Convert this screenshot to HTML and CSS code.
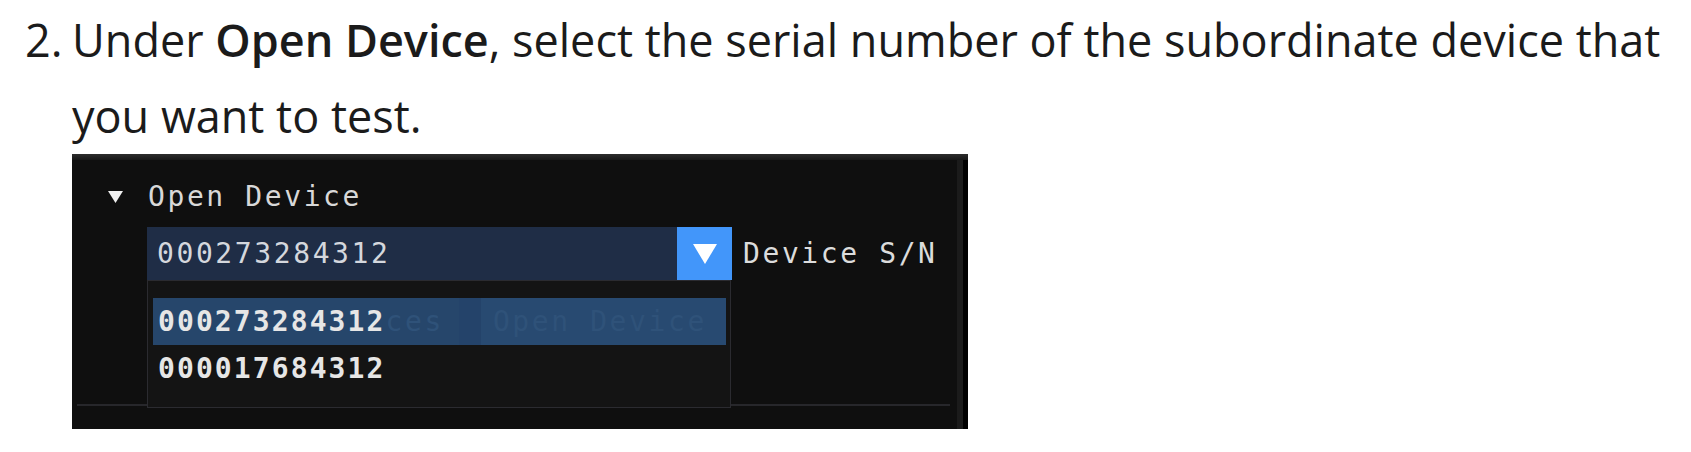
FILE: index.html
```html
<!DOCTYPE html>
<html lang="en">
<head>
<meta charset="utf-8">
<title>Open Device</title>
<link rel="stylesheet" href="styles.css">
</head>
<body>
<div class="step">
  <div class="num">2.</div>
  <div class="body">
    <p class="text">Under <b>Open Device</b>, select the serial number of the subordinate device that you want to test.</p>
    <div class="panel">
      <div class="panel-top"></div>
      <div class="panel-main">
        <div class="panel-content">
          <div class="tree-row">
            <svg class="tree-arrow" width="15" height="12" viewBox="0 0 15 12"><polygon points="0,0 15,0 7.5,12" fill="#f0f0f0"/></svg>
            <span class="mono tree-label">Open Device</span>
          </div>
          <div class="combo-row">
            <div class="combo">
              <div class="combo-value mono">000273284312</div>
              <div class="combo-btn">
                <svg width="24" height="20" viewBox="0 0 24 20"><polygon points="0,0 24,0 12,20" fill="#ffffff"/></svg>
              </div>
              <div class="popup">
                <div class="item item-active">
                  <span class="mono item-text">000273284312</span><span class="mono ghost">ces</span>
                  <span class="ghost-gap"></span>
                  <span class="ghost-btn"><span class="mono ghost">Open Device</span></span>
                </div>
                <div class="item">
                  <span class="mono item-text">000017684312</span>
                </div>
              </div>
            </div>
            <span class="mono combo-label">Device S/N</span>
          </div>
          <div class="separator"></div>
        </div>
        <div class="scroll-edge"></div>
        <div class="outer-edge"></div>
      </div>
    </div>
  </div>
</div>
</body>
</html>
```
FILE: styles.css
```css
html, body {
  margin: 0;
  padding: 0;
  background: #ffffff;
}

.step {
  display: flex;
  padding-left: 25px;
  padding-top: 2px;
  font-family: "Open Sans", "Noto Sans", sans-serif;
  font-size: 45px;
  line-height: 76px;
  color: #1b1b1b;
}

.num {
  width: 47px;
  flex: none;
}

.body {
  flex: 1;
  min-width: 0;
}

.text {
  margin: 0;
  width: 1610px;
}

.text b {
  font-weight: 600;
}

.mono {
  font-family: "DejaVu Sans Mono", "Liberation Mono", monospace;
  font-size: 28px;
  letter-spacing: 2.6px;
  line-height: 28px;
  white-space: nowrap;
}

.panel {
  width: 896px;
  height: 275px;
  background: #0f0f0f;
  display: flex;
  flex-direction: column;
}

.panel-top {
  height: 6px;
  background: linear-gradient(#2d2d2d, #171717);
  flex: none;
}

.panel-main {
  flex: 1;
  display: flex;
}

.panel-content {
  flex: 1;
  display: flex;
  flex-direction: column;
}

.scroll-edge {
  width: 6px;
  background: #1b1b1b;
}

.outer-edge {
  width: 5px;
  background: #000000;
}

.tree-row {
  margin-top: 23px;
  height: 28px;
  display: flex;
  align-items: center;
  padding-left: 36px;
}

.tree-arrow {
  display: block;
  margin-right: 25px;
}

.tree-label {
  color: #d8d8d8;
}

.combo-row {
  margin-top: 16px;
  margin-left: 75px;
  display: flex;
  align-items: center;
  height: 53px;
}

.combo {
  position: relative;
  display: flex;
  width: 585px;
  height: 53px;
}

.combo-value {
  flex: 1;
  background: #1f2d46;
  color: #d4d7dd;
  padding-left: 10px;
  display: flex;
  align-items: center;
}

.combo-btn {
  width: 55px;
  background: #4296fa;
  display: flex;
  align-items: center;
  justify-content: center;
}

.combo-btn svg {
  display: block;
}

.combo-label {
  margin-left: 11px;
  color: #dcdcdc;
}

.popup {
  position: absolute;
  left: 0;
  top: 100%;
  width: 584px;
  height: 128px;
  box-sizing: border-box;
  border: 1px solid #2b2b30;
  background: #141414;
  padding: 17px 4px 0 5px;
  z-index: 2;
}

.item {
  height: 47px;
  display: flex;
  align-items: center;
  padding-left: 5px;
}

.item-active {
  background: #26466b;
}

.item-text {
  color: #e6e6e6;
  font-weight: bold;
  letter-spacing: 2.1px;
}

.ghost {
  color: #2f5279;
}

.ghost-gap {
  width: 22px;
  height: 47px;
  margin-left: 15px;
  background: #24436a;
}

.ghost-btn {
  flex: 1;
  height: 47px;
  display: flex;
  align-items: center;
  padding-left: 12px;
  background: #284a71;
}

.separator {
  margin-top: 124px;
  margin-left: 5px;
  width: 873px;
  height: 2px;
  background: #27272b;
}
```
